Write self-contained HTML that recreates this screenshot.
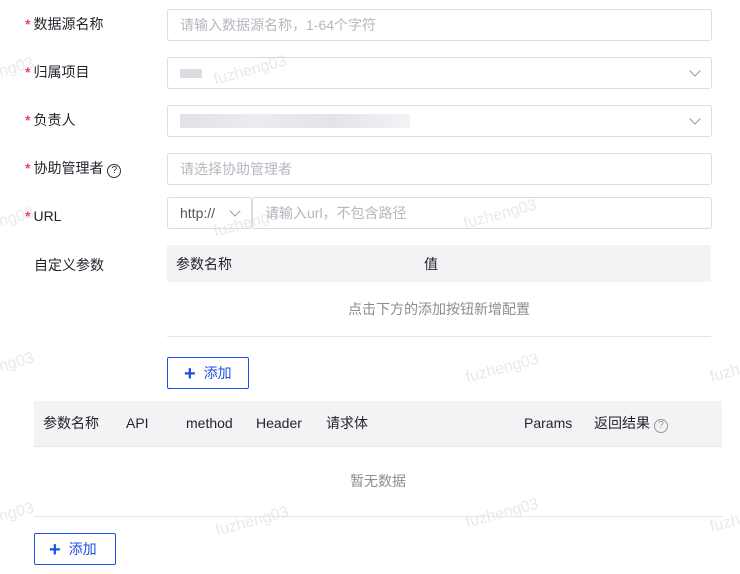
<!DOCTYPE html><html><head><meta charset="utf-8"><style>
body{margin:0;width:740px;height:574px;background:#fff;position:relative;overflow:hidden;font-family:"Liberation Sans","Noto Sans CJK SC",sans-serif;font-size:14px;color:#1f2329}
.a{position:absolute}
.lbl{position:absolute;left:25px;line-height:20px;color:#1f2329}
.lbl b{color:#e34d59;font-weight:bold;margin-right:3px}
.inp{position:absolute;left:167px;height:30px;border:1px solid #dcdcdc;border-radius:3px;line-height:30px;color:#b5b8bf;padding-left:12px;box-sizing:content-box;width:531px}
.chev{position:absolute;right:12px;top:9px;width:7px;height:7px;border-right:1px solid #999;border-bottom:1px solid #999;transform:rotate(45deg)}
.btn{position:absolute;border:1px solid #1d4fe0;border-radius:2px;color:#1d4fe0;line-height:30px;box-sizing:border-box;height:32px}
.btn span{font-size:20px;font-weight:bold;vertical-align:-2px;margin-right:8px}
.wm{position:absolute;color:#e9e9ec;font-size:16px;transform:rotate(-15deg)}
.q{display:inline-block;width:12px;height:12px;border:1.5px solid #333;border-radius:50%;font-size:10px;line-height:12px;text-align:center;vertical-align:0px;margin-left:4px}
.h{line-height:20px}
</style></head><body>
<div class="wm" style="left:-10px;top:60px">eng03</div>
<div class="wm" style="left:213px;top:62px">fuzheng03</div>
<div class="wm" style="left:-10px;top:210px">eng03</div>
<div class="wm" style="left:213px;top:214px">fuzheng03</div>
<div class="wm" style="left:463px;top:206px">fuzheng03</div>
<div class="wm" style="left:-10px;top:355px">eng03</div>
<div class="wm" style="left:465px;top:360px">fuzheng03</div>
<div class="wm" style="left:710px;top:365px">fuzh</div>
<div class="wm" style="left:-10px;top:505px">eng03</div>
<div class="wm" style="left:215px;top:513px">fuzheng03</div>
<div class="wm" style="left:465px;top:505px">fuzheng03</div>
<div class="wm" style="left:710px;top:515px">fuzh</div>

<div class="lbl" style="top:14px"><b>*</b>数据源名称</div>
<div class="inp" style="top:9px">请输入数据源名称，1-64个字符</div>
<div class="lbl" style="top:62px"><b>*</b>归属项目</div>
<div class="inp" style="top:57px"><span class="a" style="left:12px;top:11px;width:22px;height:9px;background:#dcdbe2"></span><i class="chev"></i></div>
<div class="lbl" style="top:110px"><b>*</b>负责人</div>
<div class="inp" style="top:105px"><span class="a" style="left:12px;top:8px;width:230px;height:14px;background:linear-gradient(90deg,#e2e1e8,#ecebf0,#e3e3ea,#f3f3f6)"></span><i class="chev"></i></div>
<div class="lbl" style="top:158px"><b>*</b>协助管理者<span class="q">?</span></div>
<div class="inp" style="top:153px">请选择协助管理者</div>
<div class="lbl" style="top:206px"><b>*</b>URL</div>
<div class="inp" style="top:197px;width:71px;color:#555">http://<i class="chev"></i></div>
<div class="inp" style="top:197px;left:252px;width:446px">请输入url，不包含路径</div>

<div class="lbl" style="top:255px;left:34px">自定义参数</div>
<div class="a" style="left:167px;top:245px;width:544px;height:37px;background:#f3f3f5"></div>
<div class="a h" style="left:176px;top:254px">参数名称</div>
<div class="a h" style="left:424px;top:254px">值</div>
<div class="a h" style="left:167px;top:299px;width:544px;text-align:center;color:#8a8d93">点击下方的添加按钮新增配置</div>
<div class="a" style="left:167px;top:336px;width:544px;height:1px;background:#e6e6e9"></div>
<div class="btn" style="left:167px;top:357px;width:82px;padding-left:16px"><span>+</span>添加</div>

<div class="a" style="left:34px;top:401px;width:688px;height:45px;background:#f3f3f5;border-bottom:1px solid #e6e6e9"></div>
<div class="a h" style="left:43px;top:413px">参数名称</div>
<div class="a h" style="left:126px;top:413px">API</div>
<div class="a h" style="left:186px;top:413px">method</div>
<div class="a h" style="left:256px;top:413px">Header</div>
<div class="a h" style="left:326px;top:413px">请求体</div>
<div class="a h" style="left:524px;top:413px">Params</div>
<div class="a h" style="left:594px;top:413px">返回结果<span class="q" style="border-color:#999;color:#999">?</span></div>
<div class="a h" style="left:34px;top:471px;width:688px;text-align:center;color:#8a8d93">暂无数据</div>
<div class="a" style="left:34px;top:516px;width:688px;height:1px;background:#e6e6e9"></div>
<div class="btn" style="left:34px;top:533px;width:82px;padding-left:14px"><span>+</span>添加</div>
</body></html>
